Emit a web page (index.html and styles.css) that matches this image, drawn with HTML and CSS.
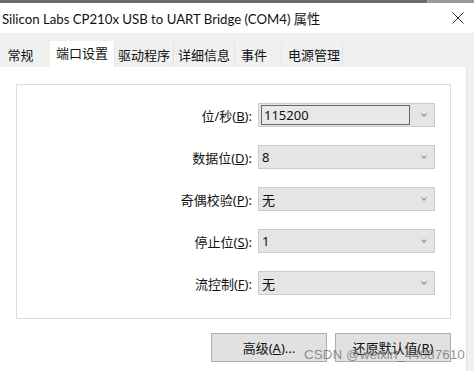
FILE: index.html
```html
<!DOCTYPE html>
<html lang="zh-CN">
<head>
    <meta charset="UTF-8">
    <title>Silicon Labs CP210x USB to UART Bridge (COM4) 属性</title>
    <link rel="stylesheet" href="styles.css">
</head>
<body>
    <div class="window">
        <div class="topbar"></div>
        <div class="titlebar">
            <span class="title">Silicon Labs CP210x USB to UART Bridge (COM4) 属性</span>
            <svg class="close" width="12" height="12" viewBox="0 0 12 12">
                <path d="M0.5 0.5 L11.5 11.5 M11.5 0.5 L0.5 11.5" stroke="#333" stroke-width="1" fill="none"/>
            </svg>
        </div>

        <div class="tabs">
            <div class="tab tab-general">常规</div>
            <div class="tab active">端口设置</div>
            <div class="tab tab-driver">驱动程序</div>
            <div class="tab tab-details">详细信息</div>
            <div class="tab tab-events">事件</div>
            <div class="tab tab-power">电源管理</div>
        </div>

        <div class="page">
            <div class="panel">
                <div class="group">
                    <div class="row">
                        <label class="label">位/秒(<u>B</u>):</label>
                        <div class="combo focused">
                            <span class="combo-value">115200</span>
                            <span class="chevron"></span>
                        </div>
                    </div>
                    <div class="row">
                        <label class="label">数据位(<u>D</u>):</label>
                        <div class="combo">
                            <span class="combo-value">8</span>
                            <span class="chevron"></span>
                        </div>
                    </div>
                    <div class="row">
                        <label class="label">奇偶校验(<u>P</u>):</label>
                        <div class="combo">
                            <span class="combo-value">无</span>
                            <span class="chevron"></span>
                        </div>
                    </div>
                    <div class="row">
                        <label class="label">停止位(<u>S</u>):</label>
                        <div class="combo">
                            <span class="combo-value">1</span>
                            <span class="chevron"></span>
                        </div>
                    </div>
                    <div class="row">
                        <label class="label">流控制(<u>F</u>):</label>
                        <div class="combo">
                            <span class="combo-value">无</span>
                            <span class="chevron"></span>
                        </div>
                    </div>
                </div>

                <div class="buttons">
                    <button class="btn">高级(<u>A</u>)...</button>
                    <button class="btn">还原默认值(<u>R</u>)</button>
                </div>
            </div>
            <div class="page-edge"></div>
        </div>

        <div class="watermark">CSDN @weixin_44087610</div>
    </div>
</body>
</html>
```

FILE: styles.css
```css
* {
    margin: 0;
    padding: 0;
    box-sizing: border-box;
}

body {
    font-family: "Noto Sans", "Noto Sans CJK SC", sans-serif;
    color: #111;
    background: #fff;
    width: 474px;
    height: 371px;
    overflow: hidden;
}

.window {
    position: relative;
    width: 474px;
    height: 371px;
    background: #fff;
}

.topbar {
    height: 3px;
    background: linear-gradient(90deg, #6b6b6b 0%, #6b6b6b 90%, #9a9a9a 90%, #9a9a9a 100%);
}

.titlebar {
    height: 30px;
    display: flex;
    align-items: center;
    justify-content: space-between;
    padding: 0 10px 0 2px;
}

.title {
    font-family: Lato, "Noto Sans CJK SC", sans-serif;
    font-size: 13.2px;
}

.close {
    display: block;
}

.tabs {
    height: 34px;
    background: #f0f0f0;
    display: flex;
    align-items: flex-end;
}

.tab {
    height: 25px;
    font-size: 13px;
    line-height: 27px;
    text-align: center;
    white-space: nowrap;
    border-right: 1px solid #e2e2e2;
    color: #111;
}

.tab-general {
    width: 50px;
    padding-right: 9px;
    border-right: none;
}

.tab.active {
    width: 65px;
    height: 26px;
    line-height: 24px;
    background: #fff;
    border-right: 1px solid #e6e6e6;
}

.tab-driver {
    width: 59px;
}

.tab-details {
    width: 61px;
}

.tab-events {
    width: 47px;
    padding-right: 8px;
}

.tab-power {
    width: 61px;
    padding-left: 4px;
}

.page {
    display: flex;
    height: 304px;
}

.panel {
    width: 467px;
    background: #fff;
    padding: 17px 15px 0 16px;
    border-right: 1px solid #e4e4e4;
}

.page-edge {
    flex: 1;
    background: #f0f0f0;
}

.group {
    height: 235px;
    border: 1px solid #dedede;
    padding: 18px 15px 0 0;
    display: flex;
    flex-direction: column;
    gap: 18px;
}

.row {
    display: flex;
    align-items: center;
    justify-content: flex-end;
    gap: 6px;
    height: 24px;
}

.label {
    font-size: 13px;
}

.combo {
    width: 177px;
    height: 24px;
    background: #e5e5e5;
    border: 1px solid #cccccc;
    display: flex;
    align-items: center;
    justify-content: space-between;
    padding: 0 8px 0 3px;
    font-size: 13px;
}

.combo.focused {
    padding-left: 2px;
}

.combo.focused .combo-value {
    flex: 1;
    height: 20px;
    line-height: 18px;
    margin-right: 12px;
    border: 1px solid #666;
    background: #e8e8e8;
    padding-left: 2px;
}

.chevron {
    width: 4px;
    height: 4px;
    border-right: 1px solid #8a8a8a;
    border-bottom: 1px solid #8a8a8a;
    transform: rotate(45deg);
    margin-top: -2px;
}

.buttons {
    display: flex;
    justify-content: flex-end;
    gap: 8px;
    margin-top: 14px;
}

.btn {
    width: 116px;
    height: 29px;
    background: #e1e1e1;
    border: 1px solid #adadad;
    font-family: inherit;
    font-size: 13px;
    color: #111;
}

.watermark {
    position: absolute;
    left: 304px;
    top: 347px;
    font-family: "Liberation Sans", sans-serif;
    font-size: 13.5px;
    white-space: nowrap;
    color: rgba(110, 110, 110, 0.75);
}
```
